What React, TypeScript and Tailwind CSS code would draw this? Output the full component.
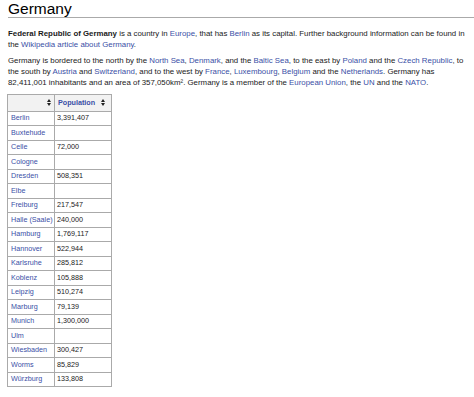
import React from 'react';

const cities: [string, string][] = [
  ['Berlin', '3,391,407'],
  ['Buxtehude', ''],
  ['Celle', '72,000'],
  ['Cologne', ''],
  ['Dresden', '508,351'],
  ['Elbe', ''],
  ['Freiburg', '217,547'],
  ['Halle (Saale)', '240,000'],
  ['Hamburg', '1,769,117'],
  ['Hannover', '522,944'],
  ['Karlsruhe', '285,812'],
  ['Koblenz', '105,888'],
  ['Leipzig', '510,274'],
  ['Marburg', '79,139'],
  ['Munich', '1,300,000'],
  ['Ulm', ''],
  ['Wiesbaden', '300,427'],
  ['Worms', '85,829'],
  ['Würzburg', '133,808'],
];

function SortIcon() {
  return (
    <svg width="4" height="7" viewBox="0 0 4 7" className="inline-block shrink-0">
      <path d="M2 0 L4 3 L0 3 Z" fill="#222" />
      <path d="M2 7 L4 4 L0 4 Z" fill="#222" />
    </svg>
  );
}

function A({ children }: { children: React.ReactNode }) {
  return <span className="text-[#3a4fa6]">{children}</span>;
}

export default function App() {
  return (
    <div className="bg-white w-[474px] h-[397px] overflow-hidden text-[#1a1a1a] font-['Liberation_Sans',Arial,sans-serif]">
      {/* Title */}
      <div className="pl-2">
        <h1 className="text-[15.5px] leading-[17px] text-black border-b border-[#aaa]">Germany</h1>
      </div>

      <div className="px-2 text-[7.85px] leading-[11px] whitespace-nowrap">
        <p className="mt-[10px]">
          <b>Federal Republic of Germany</b> is a country in <A>Europe</A>, that has <A>Berlin</A> as its capital. Further background information can be found in
          <br />
          the <A>Wikipedia article about Germany</A>.
        </p>
        <p className="mt-[5px]">
          Germany is bordered to the north by the <A>North Sea</A>, <A>Denmark</A>, and the <A>Baltic Sea</A>, to the east by <A>Poland</A> and the <A>Czech Republic</A>, to
          <br />
          the south by <A>Austria</A> and <A>Switzerland</A>, and to the west by <A>France</A>, <A>Luxembourg</A>, <A>Belgium</A> and the <A>Netherlands</A>. Germany has
          <br />
          82,411,001 inhabitants and an area of 357,050km². Germany is a member of the <A>European Union</A>, the <A>UN</A> and the <A>NATO</A>.
        </p>

        <table className="mt-[6px] -ml-[1px] border-collapse border border-[#aaa] text-[7.2px] leading-[10px] table-fixed w-[104px]">
          <thead>
            <tr className="bg-[#f2f2f2] h-[16.5px]">
              <th className="border border-[#aaa] w-[47px] px-[3px]">
                <div className="flex justify-end">
                  <SortIcon />
                </div>
              </th>
              <th className="border border-[#aaa] w-[57px] pl-[3px] pr-[6px] text-left">
                <div className="flex items-center justify-between text-[#3a4fa6] font-bold">
                  <span>Population</span>
                  <SortIcon />
                </div>
              </th>
            </tr>
          </thead>
          <tbody>
            {cities.map(([name, pop]) => (
              <tr key={name} className="h-[14.5px]">
                <td className="border border-[#aaa] pl-[3px] pr-0 text-[#3a4fa6]">{name}</td>
                <td className="border border-[#aaa] pl-[2px]">{pop}</td>
              </tr>
            ))}
          </tbody>
        </table>
      </div>
    </div>
  );
}
